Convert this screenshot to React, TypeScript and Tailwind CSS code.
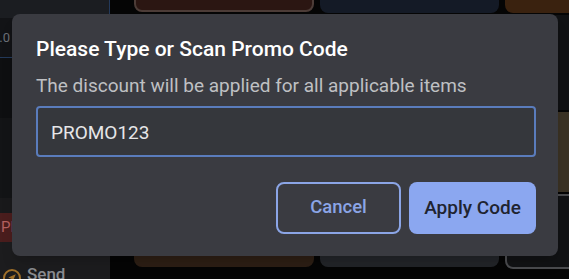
import { useState } from "react";

// Dimmed point-of-sale screen behind the promo code dialog
function Backdrop() {
    return (
        <div className="flex h-full w-full">
            {/* Sidebar */}
            <div className="flex w-[110px] shrink-0 flex-col bg-[#151619]">
                <div className="h-[18px] border-r border-[#23395a] bg-[#1b1d21]" />
                <div className="flex h-[40px] items-center border-b border-[#23395a] bg-[#121316] text-[13px] text-[#6b6f76]">
                    <span className="-ml-[8px]">0.0</span>
                </div>
                <div className="h-[60px] bg-[#0e0f11]" />
                <div className="h-[80px] bg-[#131416]" />
                <div className="h-[15px] bg-[#19191b]" />
                <div className="flex h-[29px] items-center bg-[#4a1d1d] pl-[1px] text-[15px] text-[#b66060]">PR</div>
                <div className="flex flex-1 items-end gap-[6px] bg-[#1c1c1e] pl-[3px] text-[17px] font-medium text-[#8a8c90]">
                    <span className="mb-[-8px] flex h-[18px] w-[18px] items-center justify-center rounded-full border-2 border-[#a0702a]">
                        <svg viewBox="0 0 24 24" className="h-[10px] w-[10px]" fill="#a0702a">
                            <path d="M21 3 3 10.5l7.5 3L13.5 21z" />
                        </svg>
                    </span>
                    <span className="mb-[-8px]">Send</span>
                </div>
            </div>

            {/* Product grid */}
            <div className="flex flex-1 gap-[6px] bg-[#050505] pl-[24px]">
                <div className="flex w-[180px] shrink-0 flex-col gap-[6px]">
                    <div className="-mt-[20px] h-[32px] rounded-b-[8px] border-2 border-[#4c3c37] bg-[#2b1612]" />
                    <div className="h-[249px] rounded-[8px] bg-[#2c1e14]" />
                </div>
                <div className="flex w-[179px] shrink-0 flex-col gap-[6px]">
                    <div className="-mt-[20px] h-[33px] rounded-b-[8px] bg-[#141a26]" />
                    <div className="h-[248px] rounded-[8px] bg-[#222428]" />
                </div>
                <div className="flex w-[180px] shrink-0 flex-col gap-[2px]">
                    <div className="-mt-[20px] h-[33px] rounded-b-[8px] bg-[#3a220f]" />
                    <div className="h-[95px] rounded-[8px] bg-[#101113]" />
                    <div className="flex h-[80px] items-center justify-end rounded-[8px] bg-[#3a3224] pr-[4px] text-[15px] text-[#8a8578]">w</div>
                    <div className="flex h-[75px] items-end justify-end rounded-[8px] border-2 border-[#4a4b4e] bg-[#111214] pb-[10px] pr-[2px] text-[15px] text-[#8a8c90]">e</div>
                </div>
            </div>
        </div>
    );
}

export default function App() {
    const [code, setCode] = useState("PROMO123");

    return (
        <div className="relative h-[279px] w-full overflow-hidden font-['Roboto',sans-serif]">
            <Backdrop />

            {/* Dialog layer */}
            <div className="absolute inset-0 pl-[12px] pt-[14px]">
                <div className="w-[546px] rounded-[8px] bg-[#3a3b41] pb-[22px] pl-[24px] pr-[22px] pt-[21px] shadow-lg">
                    <h2 className="text-[21px] leading-[28px] font-medium text-white">Please Type or Scan Promo Code</h2>
                    <p className="mt-[10px] text-[19px] leading-[26px] text-[#bfc0c3]">
                        The discount will be applied for all applicable items
                    </p>
                    <input
                        type="text"
                        value={code}
                        onChange={(e) => setCode(e.target.value)}
                        className="mt-[7px] h-[51px] w-full rounded-[4px] border-2 border-[#5a7cbc] bg-[#35373c] px-[13px] pt-[2px] text-[19px] text-[#e6e6e8] outline-none"
                    />
                    <div className="mt-[25px] flex justify-end gap-[8px]">
                        <button className="h-[52px] w-[125px] rounded-[8px] border-2 border-[#8ba5e6] text-[18.5px] font-medium text-[#8ba5e6]">
                            Cancel
                        </button>
                        <button className="h-[52px] w-[127px] rounded-[8px] bg-[#8ba7f0] text-[19px] font-medium text-[#1f2430]">
                            Apply Code
                        </button>
                    </div>
                </div>
            </div>
        </div>
    );
}
